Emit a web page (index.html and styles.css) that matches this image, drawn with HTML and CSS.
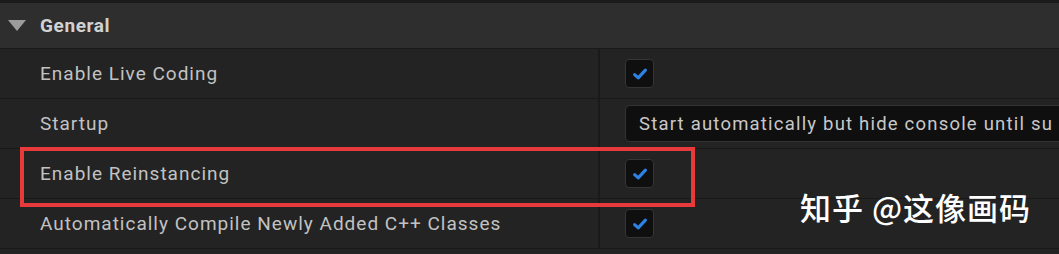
FILE: index.html
```html
<!DOCTYPE html>
<html>
<head>
<meta charset="utf-8">
<link rel="stylesheet" href="styles.css">
</head>
<body>
<div class="panel">
  <div class="topline"></div>
  <div class="header">
    <span class="arrow"></span>
    <span class="title">General</span>
  </div>
  <div class="row">
    <div class="name">Enable Live Coding</div>
    <div class="value"><span class="check"><svg viewBox="0 0 16 16" width="18" height="18"><path d="M3.2 8.6 L6.4 11.4 L12.8 4.6" fill="none" stroke="#2d82e6" stroke-width="2.8" stroke-linecap="round" stroke-linejoin="round"/></svg></span></div>
  </div>
  <div class="row">
    <div class="name">Startup</div>
    <div class="value"><div class="combo">Start automatically but hide console until su</div></div>
  </div>
  <div class="row">
    <div class="name">Enable Reinstancing</div>
    <div class="value"><span class="check"><svg viewBox="0 0 16 16" width="18" height="18"><path d="M3.2 8.6 L6.4 11.4 L12.8 4.6" fill="none" stroke="#2d82e6" stroke-width="2.8" stroke-linecap="round" stroke-linejoin="round"/></svg></span></div>
  </div>
  <div class="row">
    <div class="name">Automatically Compile Newly Added C++ Classes</div>
    <div class="value"><span class="check"><svg viewBox="0 0 16 16" width="18" height="18"><path d="M3.2 8.6 L6.4 11.4 L12.8 4.6" fill="none" stroke="#2d82e6" stroke-width="2.8" stroke-linecap="round" stroke-linejoin="round"/></svg></span></div>
  </div>
  <div class="highlight"></div>
  <div class="watermark">知乎 @这像画码</div>
</div>
</body>
</html>
```
FILE: styles.css
```css
html, body {
  margin: 0;
  padding: 0;
  background: #232323;
  overflow: hidden;
}
.panel {
  position: relative;
  width: 1059px;
  height: 254px;
  font-family: Roboto, "Liberation Sans", sans-serif;
  color: #c4c4c4;
}
.topline {
  height: 3px;
  background: #1b1b1b;
}
.header {
  height: 46px;
  background: #2e2e2e;
  border-bottom: 1px solid #1a1a1a;
  display: flex;
  align-items: center;
  box-sizing: border-box;
}
.arrow {
  width: 0;
  height: 0;
  margin-left: 8px;
  margin-right: 14px;
  border-left: 9px solid transparent;
  border-right: 9px solid transparent;
  border-top: 11px solid #9c9c9c;
}
.title {
  font-size: 19px;
  font-weight: 700;
  letter-spacing: 0.6px;
  color: #d2d2d2;
}
.row {
  display: grid;
  grid-template-columns: 600px 1fr;
  height: 50px;
  border-bottom: 1px solid #191919;
  box-sizing: border-box;
  background: #232323;
}
.name {
  display: flex;
  align-items: center;
  padding-left: 40px;
  font-size: 19px;
  letter-spacing: 1px;
  color: #c2c2c2;
  border-right: 2px solid #1a1a1a;
}
.value {
  display: flex;
  align-items: center;
  padding-left: 25px;
  overflow: hidden;
}
.check {
  width: 29px;
  height: 29px;
  box-sizing: border-box;
  background: #0f0f0f;
  border: 1px solid #353535;
  border-radius: 4px;
  display: flex;
  align-items: center;
  justify-content: center;
}
.combo {
  height: 37px;
  flex: none;
  width: 600px;
  box-sizing: border-box;
  background: #0f0f0f;
  border: 1px solid #333;
  border-radius: 5px;
  display: flex;
  align-items: center;
  padding-left: 13px;
  font-size: 18.5px;
  letter-spacing: 1.2px;
  color: #c8c8c8;
  white-space: nowrap;
}
.highlight {
  position: absolute;
  left: 20px;
  top: 147px;
  width: 675px;
  height: 60px;
  box-sizing: border-box;
  border: 4px solid #e8393b;
}
.watermark {
  position: absolute;
  left: 800px;
  top: 184px;
  font-family: "Noto Sans CJK SC", sans-serif;
  font-size: 31px;
  font-weight: 500;
  color: #ffffff;
  letter-spacing: 1px;
}
```
